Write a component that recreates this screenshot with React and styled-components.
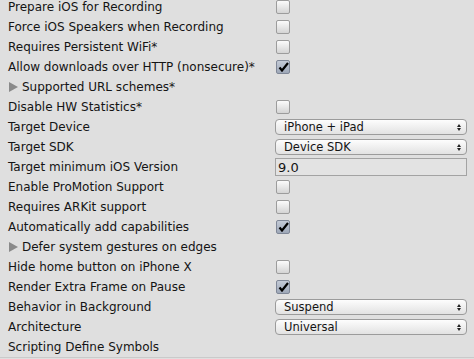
import React from "react";
import styled, { createGlobalStyle } from "styled-components";

const GlobalStyle = createGlobalStyle`
  html, body {
    margin: 0;
    padding: 0;
    background: #dfdfdf;
    overflow: hidden;
  }
`;

const Panel = styled.div`
  width: 474px;
  height: 359px;
  background: #dfdfdf;
  font-family: "DejaVu Sans", "Liberation Sans", sans-serif;
  font-size: 12px;
  color: #141414;
  overflow: hidden;
`;

const List = styled.div`
  margin-top: -3px;
  padding: 0 7px 0 8px;
  border-bottom: 1px solid #cacaca;
`;

const Row = styled.div`
  display: grid;
  grid-template-columns: 267px 192px;
  align-items: center;
  height: 20px;
`;

const Label = styled.div`
  display: flex;
  align-items: center;
  white-space: nowrap;
  padding-left: ${(p) => (p.$foldout ? "1px" : "0")};
`;

const Arrow = styled.span`
  display: inline-block;
  width: 0;
  height: 0;
  border-top: 5px solid transparent;
  border-bottom: 5px solid transparent;
  border-left: 9px solid #8a8a8a;
  margin-right: 4px;
`;

const Box = styled.div`
  width: 12px;
  height: 12px;
  margin-left: 1px;
  border: 1px solid ${(p) => (p.$checked ? "#7f8797" : "#9c9c9c")};
  border-radius: 2px;
  background: ${(p) =>
    p.$checked
      ? "linear-gradient(#c3cad6, #9ea8b8)"
      : "linear-gradient(#fbfbfb, #d4d4d4)"};
  display: flex;
  align-items: center;
  justify-content: center;
`;

const Popup = styled.div`
  height: 14px;
  border: 1px solid #9b9b9b;
  border-radius: 4px;
  background: linear-gradient(#fdfdfd, #e2e2e2);
  display: flex;
  align-items: center;
  justify-content: space-between;
  padding: 0 5px 0 8px;
  font-size: 11.5px;
`;

const Arrows = styled.span`
  display: flex;
  flex-direction: column;
  gap: 1px;
  &::before,
  &::after {
    content: "";
    width: 0;
    height: 0;
    border-left: 2px solid transparent;
    border-right: 2px solid transparent;
  }
  &::before {
    border-bottom: 3px solid #222;
  }
  &::after {
    border-top: 3px solid #222;
  }
`;

const Field = styled.div`
  height: 16px;
  border: 1px solid #a3a3a3;
  background: #e3e3e3;
  display: flex;
  align-items: center;
  padding-left: 2px;
  font-size: 13px;
`;

function Check({ checked }) {
  return (
    <Box $checked={checked}>
      {checked && (
        <svg width="11" height="10" viewBox="0 0 11 10">
          <path d="M1.5 5.5 L4 8.5 L10 1" fill="none" stroke="#000" strokeWidth="2.2" />
        </svg>
      )}
    </Box>
  );
}

const rows = [
  { label: "Prepare iOS for Recording", type: "check" },
  { label: "Force iOS Speakers when Recording", type: "check" },
  { label: "Requires Persistent WiFi*", type: "check" },
  { label: "Allow downloads over HTTP (nonsecure)*", type: "check", checked: true },
  { label: "Supported URL schemes*", type: "foldout" },
  { label: "Disable HW Statistics*", type: "check" },
  { label: "Target Device", type: "popup", value: "iPhone + iPad" },
  { label: "Target SDK", type: "popup", value: "Device SDK" },
  { label: "Target minimum iOS Version", type: "field", value: "9.0" },
  { label: "Enable ProMotion Support", type: "check" },
  { label: "Requires ARKit support", type: "check" },
  { label: "Automatically add capabilities", type: "check", checked: true },
  { label: "Defer system gestures on edges", type: "foldout" },
  { label: "Hide home button on iPhone X", type: "check" },
  { label: "Render Extra Frame on Pause", type: "check", checked: true },
  { label: "Behavior in Background", type: "popup", value: "Suspend" },
  { label: "Architecture", type: "popup", value: "Universal" },
  { label: "Scripting Define Symbols", type: "none" },
];

function Control({ row }) {
  if (row.type === "check") return <Check checked={row.checked} />;
  if (row.type === "popup")
    return (
      <Popup>
        {row.value}
        <Arrows />
      </Popup>
    );
  if (row.type === "field") return <Field>{row.value}</Field>;
  return <span />;
}

export default function App() {
  return (
    <Panel>
      <GlobalStyle />
      <List>
        {rows.map((row) => (
          <Row key={row.label}>
            <Label $foldout={row.type === "foldout"}>
              {row.type === "foldout" && <Arrow />}
              {row.label}
            </Label>
            <Control row={row} />
          </Row>
        ))}
      </List>
    </Panel>
  );
}
